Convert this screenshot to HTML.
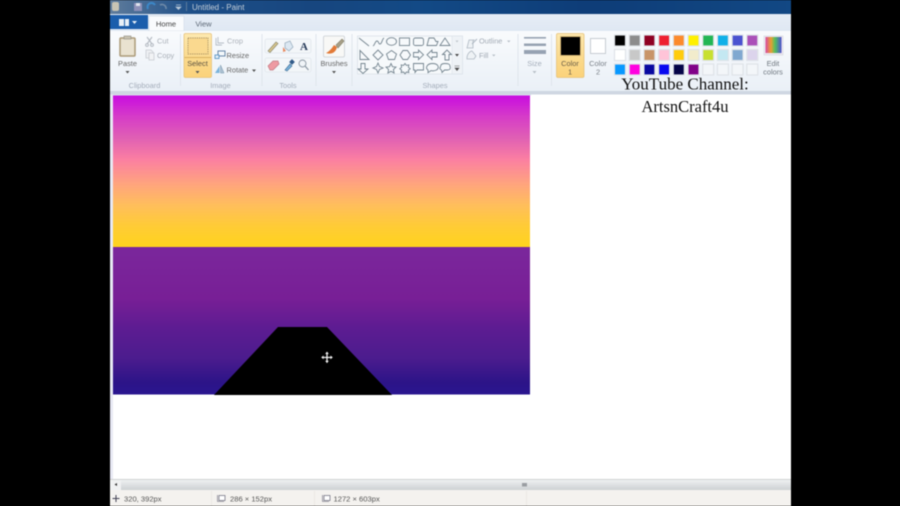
<!DOCTYPE html>
<html><head><meta charset="utf-8"><style>
html,body{margin:0;padding:0;background:#000;width:900px;height:506px;overflow:hidden}
svg{display:block;filter:blur(.4px)}
text{font-family:"Liberation Sans",sans-serif}
.l{font-size:7.4px;fill:#666}
.d{font-size:7.4px;fill:#aab0b8}
.g{font-size:7.4px;fill:#a4adba;text-anchor:middle}
.c{text-anchor:middle}
.s{fill:none;stroke:#74848f;stroke-width:.9}
.st{font-size:7.6px;fill:#555}
.t{font-family:"Liberation Serif",serif;font-size:17px;fill:#111;text-anchor:middle}
</style></head><body>
<svg width="900" height="506" viewBox="0 0 900 506" xmlns="http://www.w3.org/2000/svg">
<defs>
<linearGradient id="sky" x1="0" y1="0" x2="0" y2="1">
<stop offset="0" stop-color="#c90de0"/><stop offset=".14" stop-color="#d63cc8"/><stop offset=".28" stop-color="#e060b4"/><stop offset=".42" stop-color="#fb7fa2"/><stop offset=".58" stop-color="#ffa47e"/><stop offset=".72" stop-color="#ffbe5c"/><stop offset=".85" stop-color="#ffcb38"/><stop offset="1" stop-color="#ffd41c"/>
</linearGradient>
<linearGradient id="sea" x1="0" y1="0" x2="0" y2="1">
<stop offset="0" stop-color="#7b279c"/><stop offset=".35" stop-color="#781f96"/><stop offset=".55" stop-color="#5d1c92"/><stop offset=".75" stop-color="#4c1c8e"/><stop offset=".92" stop-color="#2c1488"/><stop offset="1" stop-color="#2a1690"/>
</linearGradient>
<linearGradient id="rib" x1="0" y1="0" x2="0" y2="1"><stop offset="0" stop-color="#f9fbfd"/><stop offset="1" stop-color="#eaf0f7"/></linearGradient>
<linearGradient id="tabs" x1="0" y1="0" x2="0" y2="1"><stop offset="0" stop-color="#e6edf6"/><stop offset="1" stop-color="#dfe8f3"/></linearGradient>
<linearGradient id="title" x1="0" y1="0" x2="1" y2="0"><stop offset="0" stop-color="#5f7c9c"/><stop offset=".12" stop-color="#1e4f88"/><stop offset=".3" stop-color="#17467f"/><stop offset=".45" stop-color="#134a86"/><stop offset=".7" stop-color="#0e3d78"/><stop offset="1" stop-color="#124884"/></linearGradient>
<linearGradient id="sel" x1="0" y1="0" x2="0" y2="1"><stop offset="0" stop-color="#fde9b0"/><stop offset=".6" stop-color="#fbd98a"/><stop offset="1" stop-color="#fbd27a"/></linearGradient>
<linearGradient id="sb" x1="0" y1="0" x2="0" y2="1"><stop offset="0" stop-color="#eef0f1"/><stop offset="1" stop-color="#cdd1d3"/></linearGradient>
<linearGradient id="rb" x1="0" y1="0" x2="1" y2="0"><stop offset="0" stop-color="#d94aa0"/><stop offset=".35" stop-color="#e8a030"/><stop offset=".6" stop-color="#50c060"/><stop offset="1" stop-color="#5050d0"/></linearGradient>
</defs>
<rect width="900" height="506" fill="#000"/>
<rect x="110" y="0" width="681" height="506" fill="#fff"/>

<!-- title bar -->
<rect x="110" y="0" width="681" height="14" fill="url(#title)"/>
<rect x="112" y="2" width="7" height="9" rx="2" fill="#c8c4b4"/>
<rect x="134" y="3" width="8" height="8" fill="#8c90b8"/><rect x="136" y="3" width="4" height="3" fill="#e0e4ee"/>
<path d="M148 9a4 4 0 0 1 7-4" fill="none" stroke="#3c88c8" stroke-width="2"/>
<path d="M166 9a4 4 0 0 0-6-4" fill="none" stroke="#6f8aa8" stroke-width="1.6"/>
<path d="M176 5h5M176 7l2.500 2.500 2.500-2.500z" fill="#b8c8d8" stroke="#b8c8d8" stroke-width=".7"/>
<rect x="186" y="2" width="1" height="9" fill="#5c7c9c"/>
<text x="192" y="10" font-size="8" fill="#c4ced8">Untitled - Paint</text>

<!-- tabs -->
<rect x="110" y="14" width="681" height="17" fill="url(#tabs)"/>
<rect x="110" y="15" width="38" height="14" fill="#1b5eac"/>
<rect x="119" y="19" width="10" height="7" fill="#e8f0f8"/><rect x="124" y="19" width="1" height="7" fill="#1b5eac"/>
<path d="M132 21h5l-2.500 3z" fill="#e8f0f8"/>
<path d="M149 31V16h35v15z" fill="#f9fbfd" stroke="#d5dde8" stroke-width=".7"/>
<text x="166" y="26.500" class="c" font-size="7.6" fill="#444">Home</text>
<text x="203.500" y="26.500" class="c" font-size="7.6" fill="#5a6674">View</text>

<!-- ribbon -->
<rect x="110" y="31" width="681" height="60" fill="url(#rib)"/>
<rect x="110" y="91" width="681" height="3.500" fill="#cfd7e2"/>

<!-- clipboard -->
<rect x="120" y="38" width="15" height="18" rx="1" fill="#e9e2d0" stroke="#ab9a78" stroke-width="1.500"/>
<rect x="124" y="36" width="7" height="3" fill="#c8c2b0" stroke="#8d8a80" stroke-width=".6"/>
<text x="127.500" y="66" class="l c" style="font-size:7.4px">Paste</text>
<path d="M125.500 71h4l-2 2.500z" fill="#555"/>
<path d="M147 37l5 7M152 37l-5 7" stroke="#b4bac2" stroke-width="1.100" fill="none"/><circle cx="147" cy="45" r="1.400" fill="none" stroke="#b4bac2"/><circle cx="152" cy="45" r="1.400" fill="none" stroke="#b4bac2"/>
<text x="157" y="43.500" class="d">Cut</text>
<path d="M146 50h5l2 2v6h-7z" fill="#eef0f3" stroke="#c8ccd2" stroke-width=".8"/><rect x="149" y="53" width="5" height="7" fill="#f2f3f5" stroke="#c8ccd2" stroke-width=".8"/>
<text x="157" y="58" class="d">Copy</text>
<text x="144.500" y="88" class="g">Clipboard</text>
<rect x="180" y="34" width="1" height="52" fill="#dfe5ec"/>

<!-- image -->
<rect x="184" y="33.500" width="27.500" height="44" rx="1.500" fill="url(#sel)" stroke="#e6c27a" stroke-width=".8"/>
<rect x="184.500" y="57" width="26.500" height="1" fill="#d8b060"/>
<rect x="188" y="38" width="20" height="16" fill="#fad98f" stroke="#8a7650" stroke-width=".7" stroke-dasharray="1.200 1"/>
<text x="197.500" y="66" class="l c" style="fill:#5a5040">Select</text>
<path d="M195.500 71h4l-2 2.500z" fill="#555"/>
<path d="M216 38v7h6M218 37v6h6" fill="none" stroke="#b4bcc6" stroke-width=".9"/>
<text x="227" y="43.500" class="d">Crop</text>
<rect x="218" y="51" width="7" height="5" fill="#f4f8fb" stroke="#5a7ca0" stroke-width=".9"/><rect x="215" y="55" width="4" height="3.500" fill="#e4eef7" stroke="#4c8cc0" stroke-width=".8"/>
<text x="226.500" y="58" class="l">Resize</text>
<path d="M215 73l4.500-7v7z" fill="#7ab4dc"/><path d="M220.500 73v-8l3.500 8z" fill="#b0c4d4" stroke="#7090a8" stroke-width=".5"/>
<text x="226.500" y="72.700" class="l">Rotate</text><path d="M252 69.500h4l-2 2.500z" fill="#555"/>
<text x="220.500" y="88" class="g">Image</text>
<rect x="261.500" y="34" width="1" height="52" fill="#dfe5ec"/>

<!-- tools -->
<rect x="265" y="39" width="46" height="14" rx="2" fill="#f3f6f9" stroke="#e0e6ec" stroke-width=".8"/>
<rect x="265" y="58" width="46" height="14" rx="2" fill="#f3f6f9" stroke="#e0e6ec" stroke-width=".8"/>
<path d="M268 51l8-9 2 1.500-8 9z" fill="#d8c68c" stroke="#8e8a70" stroke-width=".7"/>
<path d="M285 43l5-2 3 6-4 4-4-3z" fill="#dce8f2" stroke="#9cb0c0" stroke-width=".8"/><path d="M283 47l3 4-3 1z" fill="#e88a60"/>
<text x="304" y="50" class="c" style="font-family:'Liberation Serif',serif;font-weight:bold;font-size:11px;fill:#263a58">A</text>
<path d="M268 66l5-5h5l1 3-6 6h-3z" fill="#ee9aa2" stroke="#c07a84" stroke-width=".7"/>
<path d="M285 70l5-6 2 2-5 5z" fill="#7ab4dc" stroke="#3c6a94" stroke-width=".6"/><rect x="290" y="60" width="4" height="4" fill="#305a88" transform="rotate(45 292 62)"/>
<circle cx="302.500" cy="63.500" r="3.500" fill="#f0f4f8" stroke="#8c98a4" stroke-width=".9"/><path d="M305 66l3.500 4" stroke="#8c98a4" stroke-width="1.300"/>
<text x="288" y="88" class="g">Tools</text>
<rect x="315.500" y="34" width="1" height="52" fill="#dfe5ec"/>

<!-- brushes -->
<rect x="323.500" y="36" width="21" height="21" rx="1.500" fill="#f8f8f6" stroke="#c9ced4" stroke-width=".8"/>
<path d="M326 53c6 2 10-1 11-6l-3-2c-2 3-4 6-8 8z" fill="#e27a38"/>
<path d="M336 45l6-6 2 2-6 7z" fill="#a8a088" stroke="#84806c" stroke-width=".6"/>
<text x="334" y="66" class="l c">Brushes</text>
<path d="M332 71h4l-2 2.500z" fill="#555"/>
<rect x="351.500" y="34" width="1" height="52" fill="#dfe5ec"/>

<!-- shapes gallery -->
<rect x="357.500" y="36" width="105" height="38" fill="#f6f9fb" stroke="#dbe2e9" stroke-width=".8"/>
<rect x="452" y="36" width="10.500" height="38" fill="#eef2f6" stroke="#dbe2e9" stroke-width=".6"/>
<path d="M457 42.500l1.500-2h-3z" fill="#c0c6cc"/><path d="M455 54h4l-2 2.500z" fill="#444"/><path d="M454.500 66h5M455 68h4l-2 2.500z" fill="#444" stroke="#555" stroke-width=".6"/>
<g class="s">
<path d="M359 38l10 8"/>
<path d="M373 46c2-1 2-5 4-5s1 3 3 3 2-5 4-6"/>
<ellipse cx="391.500" cy="41.500" rx="5" ry="3.800"/>
<rect x="399.500" y="38" width="10" height="7.500"/>
<rect x="413.500" y="38" width="10" height="7.500" rx="1.800"/>
<path d="M427 45.500l2-7.500h5l2 3.500h2l-1.500 4z"/>
<path d="M440 45.500l5-7.500 5 7.500z"/>
<path d="M360 59.500v-9l9 9z"/>
<path d="M378 50l5 5-5 5-5-5z"/>
<path d="M391.500 50.500l5 3.500-2 5.500h-6l-2-5.500z"/>
<path d="M403 50.500h4.500l3 4.500-3 4.500H403l-3-4.500z"/>
<path d="M413.500 52.500h5V50l5 4.800-5 4.800v-2.600h-5z"/>
<path d="M437 52.500h-5V50l-5 4.800 5 4.800v-2.600h5z"/>
<path d="M442.500 54.500L447 50l4.500 4.500h-2.500V60h-4v-5.500z"/>
<path d="M361 63.500h4V69h3l-5 4.500-5-4.500h3z"/>
<path d="M378 63l1.500 3.500 3.500 1.500-3.500 1.500-1.500 3.500-1.500-3.500-3.500-1.500 3.500-1.500z"/>
<path d="M391 63.500l1.500 3.200 3.500.4-2.600 2.400.7 3.500-3.100-1.700-3.100 1.700.7-3.500-2.600-2.400 3.500-.4z"/>
<path d="M405 63.500l1.400 1.900 2.400-.5-.4 2.400 1.800 1.400-1.800 1.400.4 2.400-2.400-.5-1.400 1.900-1.400-1.900-2.400.5.400-2.400-1.800-1.400 1.800-1.400-.4-2.400 2.400.5z"/>
<path d="M413.500 63.500h10v6.500h-6.500l-2 2.500v-2.500h-1.500z"/>
<path d="M428 70c-3-2-1-6.500 4.500-6.500s7.500 4 4 6.500c-2 1-4 1-5.500.6l-3 2z"/>
<path d="M441.500 70c-2-1-2-2-1-3 0-3 2-3.500 4-3.500 3 0 5.500 0 5.500 3 1 1.500 0 3.500-2.500 3.500h-3l-2.500 2.500z"/>
</g>
<path d="M467 48l2-8h5l-1 1 0 7z" fill="#eef2f5" stroke="#aeb8c2" stroke-width=".8"/><path d="M472 44l5-5" stroke="#aeb8c2" stroke-width="1"/>
<text x="479" y="43.500" class="d" style="fill:#a2aab4">Outline</text><path d="M507 40.500h3.500l-1.700 2z" fill="#b8c0c8"/>
<path d="M467 58c0-4 3-7 5-7l4 5-2 3h-7z" fill="#eef2f5" stroke="#aeb8c2" stroke-width=".8"/>
<text x="479" y="58" class="d" style="fill:#a2aab4">Fill</text><path d="M492 54.500h3.500l-1.700 2z" fill="#b8c0c8"/>
<text x="435" y="88" class="g">Shapes</text>
<rect x="517.500" y="34" width="1" height="52" fill="#dfe5ec"/>

<!-- size -->
<rect x="524" y="37" width="22" height="1.600" fill="#96a2b2"/>
<rect x="524" y="43.500" width="22" height="2.500" fill="#96a2b2"/>
<rect x="524" y="50" width="22" height="4" fill="#96a2b2"/>
<text x="534.500" y="66" class="g">Size</text>
<path d="M532.500 71h4l-2 2.500z" fill="#b8c0c8"/>
<rect x="551" y="34" width="1" height="52" fill="#dfe5ec"/>

<!-- color 1, 2 -->
<rect x="556.500" y="33.500" width="27.500" height="44" rx="1.500" fill="url(#sel)" stroke="#e6c27a" stroke-width=".8"/>
<rect x="560" y="36" width="21" height="20" fill="#d8b876"/>
<rect x="561" y="37" width="19" height="18" fill="#000"/>
<text x="570" y="66" class="l c" style="fill:#6a5e48">Color</text>
<text x="570" y="74.500" class="l c" style="fill:#6a5e48">1</text>
<rect x="590.500" y="38.500" width="15" height="15" fill="#fff" stroke="#c6ccd2" stroke-width="1"/>
<text x="598" y="66" class="l c" style="fill:#7a8088">Color</text>
<text x="598" y="74.500" class="l c" style="fill:#7a8088">2</text>

<!-- palette -->
<g stroke="#dfe3e8" stroke-width="1.200">
<rect x="614.500" y="35" width="11" height="11" fill="#000"/>
<rect x="629.200" y="35" width="11" height="11" fill="#8c8c8c"/>
<rect x="643.900" y="35" width="11" height="11" fill="#8e0022"/>
<rect x="658.600" y="35" width="11" height="11" fill="#ee2030"/>
<rect x="673.300" y="35" width="11" height="11" fill="#fc8a2c"/>
<rect x="688" y="35" width="11" height="11" fill="#fff000"/>
<rect x="702.700" y="35" width="11" height="11" fill="#22b654"/>
<rect x="717.400" y="35" width="11" height="11" fill="#10b0e8"/>
<rect x="732.100" y="35" width="11" height="11" fill="#4a52d0"/>
<rect x="746.800" y="35" width="11" height="11" fill="#aa50b8"/>
<rect x="614.500" y="49.500" width="11" height="11" fill="#fff"/>
<rect x="629.200" y="49.500" width="11" height="11" fill="#c8c8c8"/>
<rect x="643.900" y="49.500" width="11" height="11" fill="#c89468"/>
<rect x="658.600" y="49.500" width="11" height="11" fill="#ffc4d8"/>
<rect x="673.300" y="49.500" width="11" height="11" fill="#ffcc0c"/>
<rect x="688" y="49.500" width="11" height="11" fill="#f2eccc"/>
<rect x="702.700" y="49.500" width="11" height="11" fill="#c8e030"/>
<rect x="717.400" y="49.500" width="11" height="11" fill="#c4e8f2"/>
<rect x="732.100" y="49.500" width="11" height="11" fill="#80a8d0"/>
<rect x="746.800" y="49.500" width="11" height="11" fill="#dcd4ec"/>
<rect x="614.500" y="64" width="11" height="11" fill="#0898ff"/>
<rect x="629.200" y="64" width="11" height="11" fill="#ff00e0"/>
<rect x="643.900" y="64" width="11" height="11" fill="#0808a0"/>
<rect x="658.600" y="64" width="11" height="11" fill="#0808f0"/>
<rect x="673.300" y="64" width="11" height="11" fill="#040448"/>
<rect x="688" y="64" width="11" height="11" fill="#800088"/>
<rect x="702.700" y="64" width="11" height="11" fill="#f3f6f9"/>
<rect x="717.400" y="64" width="11" height="11" fill="#f3f6f9"/>
<rect x="732.100" y="64" width="11" height="11" fill="#f3f6f9"/>
<rect x="746.800" y="64" width="11" height="11" fill="#f3f6f9"/>
</g>
<rect x="764" y="36" width="19" height="19" fill="#ece4ee" stroke="#dcdfe4" stroke-width=".8"/>
<rect x="765.500" y="37" width="16" height="16" fill="url(#rb)"/>
<text x="773" y="66" class="l c" style="fill:#707880">Edit</text>
<text x="773" y="74.500" class="l c" style="fill:#707880">colors</text>

<text x="685" y="89.500" class="t">YouTube Channel:</text>
<text x="685" y="112" class="t" style="font-size:16.500px">ArtsnCraft4u</text>

<!-- workspace -->
<rect x="110" y="94.500" width="3" height="385" fill="#e8e9f4"/>
<rect x="113" y="94.500" width="418" height="1" fill="#d8dcec"/>
<rect x="113" y="95.500" width="417" height="152" fill="url(#sky)"/>
<rect x="113" y="247" width="417" height="147.500" fill="url(#sea)"/>
<path d="M278 327H327L392 395H214z" fill="#000"/>
<path d="M327 351.500l2 2.500h-1.300v2.700h2.700v-1.300l2.500 2-2.500 2v-1.300h-2.700v2.700h1.300l-2 2.500-2-2.500h1.300v-2.700h-2.700v1.300l-2.500-2 2.500-2v1.300h2.700V354h-1.300z" fill="#fff" stroke="#222" stroke-width=".3"/>

<!-- scrollbar -->
<rect x="110" y="479" width="681" height="11" fill="#f0f1f2"/>
<rect x="110" y="479" width="681" height=".8" fill="#c8cacc"/>
<rect x="121" y="480" width="670" height="10" fill="url(#sb)"/>
<path d="M117 483v3l-2.500-1.500z" fill="#333"/>
<rect x="522" y="483" width="5" height="3.500" fill="#9a9ea2"/>

<!-- status -->
<rect x="110" y="490" width="681" height="16" fill="#f4f2ef"/>
<rect x="211" y="491" width="1" height="15" fill="#ebe8e4"/>
<rect x="314" y="491" width="1" height="15" fill="#ebe8e4"/>
<rect x="526" y="491" width="1" height="15" fill="#ebe8e4"/>
<path d="M116 495v7M112.500 498.500h7" stroke="#445" stroke-width="1"/>
<text x="124" y="501.500" class="st">320, 392px</text>
<rect x="219" y="495.500" width="6" height="5" fill="#fff" stroke="#667" stroke-width=".7"/>
<path d="M217.500 495v6.500H224" fill="none" stroke="#667" stroke-width=".6"/>
<text x="230" y="501.500" class="st">286 × 152px</text>
<rect x="324" y="495.500" width="6" height="5" fill="#fff" stroke="#667" stroke-width=".7"/>
<path d="M322.500 495v6.500H329" fill="none" stroke="#667" stroke-width=".6"/>
<text x="333.500" y="501.500" class="st">1272 × 603px</text>
</svg>
</body></html>
